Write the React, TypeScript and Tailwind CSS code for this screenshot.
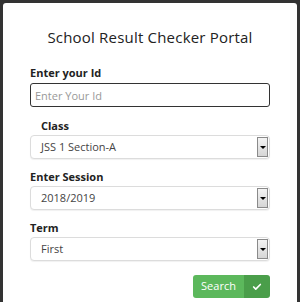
import { Check } from 'lucide-react';

function SelectBox({ value }: { value: string }) {
  return (
    <div className="flex h-[24px] items-stretch rounded-[4px] border border-[#dcdcdc] bg-white shadow-[0_1px_1px_rgba(0,0,0,0.06)]">
      <span className="flex flex-1 items-center pl-[10px] text-[11px] text-[#444]">{value}</span>
      <span className="my-[1px] mr-[1px] flex w-[11px] items-center justify-center border border-[#8a8a8a] bg-gradient-to-b from-[#f4f4f4] to-[#d6d6d6]">
        <span className="h-0 w-0 border-x-[3px] border-t-[3px] border-x-transparent border-t-black" />
      </span>
    </div>
  );
}

export default function App() {
  return (
    <div className="h-[302px] w-[300px] overflow-hidden bg-[#333] pl-[3px] pr-[3px] pt-[3px] font-['Open_Sans',sans-serif]">
      <div className="h-[320px] rounded-t-[3px] bg-white px-[27px] pt-[24px]">
        <h1 className="text-center text-[15px] leading-[20px] font-normal tracking-[0.2px] text-[#222]">School Result Checker Portal</h1>

        <div className="mt-[19px] flex flex-col">
          <label className="text-[11px] leading-[14px] font-bold text-[#222]">Enter your Id</label>
          <input
            className="mt-[3px] h-[24px] rounded-[3px] border border-[#333] px-[4px] text-[11px] outline-none placeholder:text-[#999]"
            placeholder="Enter Your Id"
          />

          <label className="mt-[12px] pl-[11px] text-[11px] leading-[14px] font-bold text-[#222]">Class</label>
          <div className="mt-[2px]">
            <SelectBox value="JSS 1 Section-A" />
          </div>

          <label className="mt-[11px] text-[11px] leading-[14px] font-bold text-[#222]">Enter Session</label>
          <div className="mt-[2px]">
            <SelectBox value="2018/2019" />
          </div>

          <label className="mt-[11px] text-[11px] leading-[14px] font-bold text-[#222]">Term</label>
          <div className="mt-[2px]">
            <SelectBox value="First" />
          </div>

          <div className="mt-[14px] flex justify-end">
            <button className="flex h-[23px] overflow-hidden rounded-[3px] text-[11px] text-white">
              <span className="flex w-[51px] items-center justify-center bg-[#5cb85c]">Search</span>
              <span className="flex w-[26px] items-center justify-center bg-[#4a9e4a]">
                <Check size={10} strokeWidth={4} />
              </span>
            </button>
          </div>
        </div>
      </div>
    </div>
  );
}
